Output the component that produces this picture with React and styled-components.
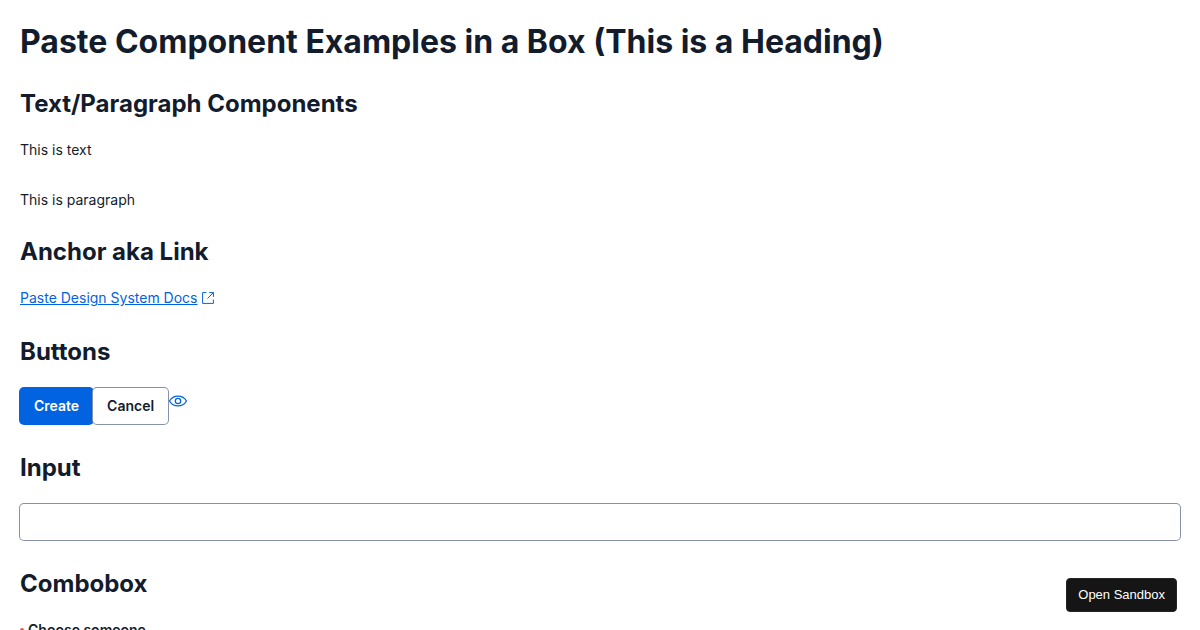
import React from "react";
import styled, { createGlobalStyle } from "styled-components";

export default function App() {
  const [name, setName] = React.useState("");

  return (
    <>
      <GlobalStyle />
      <Page>
        <Title>Paste Component Examples in a Box (This is a Heading)</Title>

        <Heading>Text/Paragraph Components</Heading>
        <Text>This is text</Text>
        <Paragraph>This is paragraph</Paragraph>

        <Heading>Anchor aka Link</Heading>
        <Anchor href="#docs">
          Paste Design System Docs
          <LinkExternalIcon />
        </Anchor>

        <Heading $spaced>Buttons</Heading>
        <ButtonRow>
          <Button $primary>Create</Button>
          <Button>Cancel</Button>
          <IconButton aria-label="Show">
            <EyeIcon />
          </IconButton>
        </ButtonRow>

        <Heading $spaced id="input-heading">
          Input
        </Heading>
        <InputBox
          aria-labelledby="input-heading"
          value={name}
          onChange={(e) => setName(e.target.value)}
        />

        <Heading $spaced>Combobox</Heading>
        <Label htmlFor="someone">
          <RequiredDot />
          Choose someone
        </Label>
        <InputBox id="someone" role="combobox" aria-expanded="false" />
      </Page>
      <SandboxButton>Open Sandbox</SandboxButton>
    </>
  );
}

function LinkExternalIcon() {
  return (
    <svg width="20" height="20" viewBox="0 0 20 20" fill="none" stroke="currentColor" aria-hidden="true">
      <path d="M8 4.600H4.600v10.800h10.800V12M11.500 4.600h3.900v3.900M15.200 4.800 9.800 10.200" strokeLinecap="round" strokeLinejoin="round" />
    </svg>
  );
}

function EyeIcon() {
  return (
    <svg width="20" height="20" viewBox="0 0 20 20" fill="none" stroke="currentColor" strokeWidth="1.250" aria-hidden="true">
      <path d="M1.500 10C3.300 6.900 6.500 5.100 10 5.100s6.700 1.800 8.500 4.900c-1.800 3.100-5 4.900-8.500 4.900S3.300 13.100 1.500 10Z" strokeLinejoin="round" />
      <circle cx="10" cy="10" r="2.700" />
    </svg>
  );
}

const GlobalStyle = createGlobalStyle`
  * {
    box-sizing: border-box;
  }

  body {
    margin: 0;
    background-color: #ffffff;
    color: #121c2d;
    font-family: Inter, sans-serif;
    font-size: 14px;
    line-height: 20px;
  }
`;

const Page = styled.main`
  padding: 20px;
`;

const Title = styled.h1`
  margin: 0 0 26px;
  font-size: 32px;
  font-weight: 700;
  line-height: 44px;
`;

const Heading = styled.h2`
  margin: ${(props) => (props.$spaced ? "30px" : "0")} 0 22px;
  font-size: 24px;
  font-weight: 700;
  line-height: 28px;
`;

const Text = styled.div`
  margin-bottom: 30px;
`;

const Paragraph = styled.p`
  margin: 0 0 28px;
`;

const Anchor = styled.a`
  display: inline-flex;
  align-items: center;
  color: #0263e0;
  text-decoration: underline;
`;

const ButtonRow = styled.div`
  display: flex;
  align-items: flex-start;
`;

const Button = styled.button`
  padding: 8px 14px;
  border: none;
  border-radius: 4px;
  background-color: ${(props) => (props.$primary ? "#0263e0" : "#ffffff")};
  box-shadow: 0 0 0 1px ${(props) => (props.$primary ? "#0263e0" : "#8891aa")};
  color: ${(props) => (props.$primary ? "#ffffff" : "#121c2d")};
  font: 600 14px/20px Inter, sans-serif;
  cursor: pointer;
`;

const IconButton = styled.button`
  display: flex;
  padding: 3px 0;
  border: none;
  background: none;
  color: #0263e0;
  cursor: pointer;
`;

const InputBox = styled.input`
  display: block;
  width: 100%;
  padding: 8px 12px;
  border: none;
  border-radius: 4px;
  outline: none;
  background-color: #ffffff;
  box-shadow: 0 0 0 1px #8891aa;
  color: #121c2d;
  font: 14px/20px Inter, sans-serif;

  &:focus {
    box-shadow: 0 0 0 2px #0263e0;
  }
`;

const Label = styled.label`
  display: flex;
  align-items: center;
  gap: 4px;
  margin-bottom: 8px;
  font-weight: 600;
`;

const RequiredDot = styled.span`
  width: 4px;
  height: 4px;
  border-radius: 50%;
  background-color: #eb5656;
`;

const SandboxButton = styled.button`
  position: fixed;
  right: 23px;
  bottom: 18px;
  padding: 8px 11px;
  border: 1px solid #252525;
  border-radius: 4px;
  background-color: #151515;
  color: #ffffff;
  font: 13px/16px "Liberation Sans", Arial, sans-serif;
  cursor: pointer;
`;
